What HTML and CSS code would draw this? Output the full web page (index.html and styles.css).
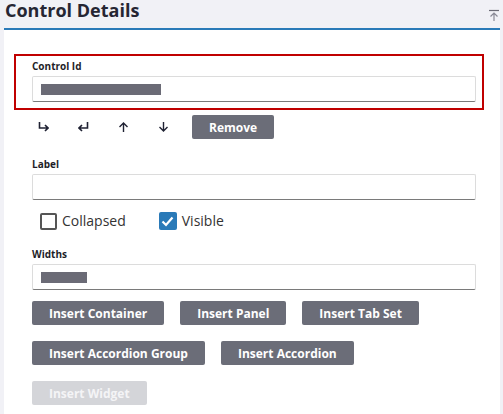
FILE: index.html
```html
<!DOCTYPE html>
<html lang="en">
  <head>
    <meta charset="UTF-8" />
    <meta name="viewport" content="width=device-width, initial-scale=1.0" />
    <title>Control Details</title>
    <link rel="stylesheet" href="styles.css">
  </head>
  <body>
    <header class="PanelHeader">
      <h2>Control Details</h2>
      <button class="CollapseButton" title="Collapse">
        <svg width="10" height="12" viewBox="0 0 10 12">
          <path d="M0 1.5 H10" stroke="#6b6b76" stroke-width="1.2" fill="none" />
          <path d="M5 12 V4 M1.5 7.5 L5 4 L8.5 7.5" stroke="#8a8a96" stroke-width="1.2" fill="none" />
        </svg>
      </button>
    </header>
    <main class="Panel">
      <div class="Field Field--selected">
        <label class="FieldLabel">Control Id</label>
        <div class="FieldInput"><span class="Redacted Redacted--long"></span></div>
      </div>

      <div class="Tools">
        <button class="IconButton" title="Indent">
          <svg width="11" height="10" viewBox="0 0 11 10">
            <path d="M1.5 0 V6 H10 M7 3 L10 6 L7 9" stroke="#1f2233" stroke-width="1.6" fill="none" />
          </svg>
        </button>
        <button class="IconButton" title="Outdent">
          <svg width="11" height="10" viewBox="0 0 11 10">
            <path d="M9.5 0 V6 H1 M4 3 L1 6 L4 9" stroke="#1f2233" stroke-width="1.6" fill="none" />
          </svg>
        </button>
        <button class="IconButton" title="Move up">
          <svg width="11" height="10" viewBox="0 0 11 10">
            <path d="M5.5 10 V1 M1.5 5 L5.5 1 L9.5 5" stroke="#1f2233" stroke-width="1.4" fill="none" />
          </svg>
        </button>
        <button class="IconButton" title="Move down">
          <svg width="11" height="10" viewBox="0 0 11 10">
            <path d="M5.5 0 V9 M1.5 5 L5.5 9 L9.5 5" stroke="#1f2233" stroke-width="1.4" fill="none" />
          </svg>
        </button>
        <button class="Button Button--remove">Remove</button>
      </div>

      <div class="Field">
        <label class="FieldLabel">Label</label>
        <div class="FieldInput"></div>
      </div>

      <div class="Checks">
        <label class="Check"><span class="CheckBox"></span>Collapsed</label>
        <label class="Check">
          <span class="CheckBox CheckBox--checked">
            <svg width="13" height="11" viewBox="0 0 13 11">
              <path d="M1.5 5.5 L5 9 L11.5 1.5" stroke="#fff" stroke-width="2.2" fill="none" />
            </svg>
          </span>Visible
        </label>
      </div>

      <div class="Field Field--widths">
        <label class="FieldLabel">Widths</label>
        <div class="FieldInput"><span class="Redacted Redacted--short"></span></div>
      </div>

      <div class="Actions">
        <div class="ActionRow">
          <button class="Button">Insert Container</button>
          <button class="Button">Insert Panel</button>
          <button class="Button">Insert Tab Set</button>
        </div>
        <div class="ActionRow">
          <button class="Button">Insert Accordion Group</button>
          <button class="Button">Insert Accordion</button>
        </div>
        <div class="ActionRow">
          <button class="Button Button--disabled" disabled>Insert Widget</button>
        </div>
      </div>
    </main>
  </body>
</html>
```

FILE: styles.css
```css
:root {
  --color-dark: #262633;
  --color-page: #f1f1f6;
  --color-accent: #2a7ab8;
  --color-button: #6b6d78;
  --color-selected: #c00000;
}

html,
body {
  height: 100%;
}

body {
  margin: 0;
  font-family: "Open Sans", sans-serif;
  color: var(--color-dark);
  background-color: var(--color-page);
  display: flex;
  flex-direction: column;
  overflow: hidden;
}

button {
  font-family: inherit;
  border: 0;
  background: none;
  padding: 0;
  cursor: pointer;
}

.PanelHeader {
  height: 28px;
  display: flex;
  justify-content: space-between;
  align-items: flex-start;
  padding: 0 3px 0 5px;
}

.PanelHeader h2 {
  margin: -2px 0 0;
  font-size: 18px;
  line-height: 24px;
  font-weight: 700;
}

.CollapseButton {
  margin-top: 9px;
  margin-right: 1px;
  display: flex;
}

.Panel {
  flex: 1;
  margin: 0 3px 0 4px;
  background: #fff;
  border-top: 2px solid var(--color-accent);
  padding: 24px 16px 0 10px;
}

.Field {
  padding: 0 8px 0 18px;
}

.Field--selected {
  border: 2px solid var(--color-selected);
  padding: 3px 6px 6px 16px;
}

.FieldLabel {
  display: block;
  font-size: 10px;
  line-height: 14px;
  font-weight: 700;
  color: #1e1e28;
  margin-bottom: 3px;
}

.FieldInput {
  height: 26px;
  box-sizing: border-box;
  border: 1px solid #dcdcdc;
  border-bottom-color: #7a7a7a;
  border-radius: 2px;
  display: flex;
  align-items: center;
  padding-left: 8px;
}

.Redacted {
  display: block;
  height: 11px;
  background: #6b6b76;
}

.Redacted--long {
  width: 120px;
}

.Redacted--short {
  width: 46px;
}

.Tools {
  display: flex;
  align-items: center;
  padding: 5px 0 0 24px;
  margin-bottom: 18px;
}

.IconButton {
  width: 11px;
  height: 24px;
  display: flex;
  align-items: center;
  margin-right: 29px;
}

.Button {
  height: 24px;
  padding: 0 17px;
  background: var(--color-button);
  color: #fff;
  font-size: 12px;
  font-weight: 700;
  border-radius: 2px;
  white-space: nowrap;
}

.Button--remove {
  margin-left: -6px;
}

.Button--disabled {
  background: #d4d5d9;
  color: #f4f4f6;
  cursor: default;
}

.Checks {
  display: flex;
  gap: 33px;
  padding-left: 26px;
  margin: 11px 0 16px;
}

.Check {
  display: flex;
  align-items: center;
  gap: 5px;
  font-size: 14px;
  line-height: 20px;
  color: #333;
}

.CheckBox {
  width: 17px;
  height: 17px;
  box-sizing: border-box;
  border: 2px solid #555;
  border-radius: 2px;
  display: flex;
  align-items: center;
  justify-content: center;
}

.CheckBox--checked {
  width: 18px;
  height: 18px;
  border: 0;
  background: var(--color-accent);
}

.Actions {
  padding-left: 18px;
  margin-top: 11px;
  display: flex;
  flex-direction: column;
  gap: 16px;
}

.ActionRow {
  display: flex;
  gap: 16px;
}
```
